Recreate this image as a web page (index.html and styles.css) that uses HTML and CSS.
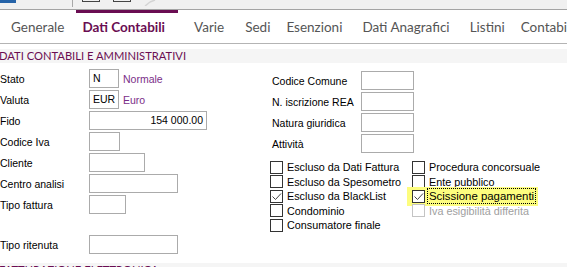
FILE: index.html
```html
<!DOCTYPE HTML>
<html>

<head>
    <meta charset="utf-8">
    <title>Dati Contabili</title>
    <link rel="stylesheet" href="styles.css">
</head>

<body>
    <!-- barra strumenti (tagliata in alto) -->
    <div class="toolbar">
        <span class="tb-blue"></span>
        <span class="tb-sep"></span>
        <span class="tb-btn"></span>
        <span class="tb-btn"></span>
        <svg class="tb-icon" width="12" height="6" viewBox="0 0 12 6">
            <path d="M1 6 L6 2 M6 2 L11 0" stroke="#d4d4d4" stroke-width="1.5" fill="none" />
        </svg>
    </div>

    <nav class="tabs">
        <span class="tab t-gen">Generale</span>
        <span class="tab active">Dati Contabili</span>
        <span class="tab">Varie</span>
        <span class="tab t-sedi">Sedi</span>
        <span class="tab t-ese">Esenzioni</span>
        <span class="tab t-ana">Dati Anagrafici</span>
        <span class="tab t-lis">Listini</span>
        <span class="tab">Contabilità</span>
    </nav>

    <div class="section-head">DATI CONTABILI E AMMINISTRATIVI</div>

    <div class="form">
        <div class="col-left">
            <div class="row"><label>Stato</label><span class="field w29">N</span><span class="desc">Normale</span></div>
            <div class="row"><label>Valuta</label><span class="field w29">EUR</span><span class="desc">Euro</span></div>
            <div class="row"><label>Fido</label><span class="field w117 num">154 000.00</span></div>
            <div class="row"><label>Codice Iva</label><span class="field w30"></span></div>
            <div class="row"><label>Cliente</label><span class="field w55"></span></div>
            <div class="row"><label>Centro analisi</label><span class="field w88"></span></div>
            <div class="row"><label>Tipo fattura</label><span class="field w36"></span></div>
            <div class="row spaced"><label>Tipo ritenuta</label><span class="field w88"></span></div>
        </div>

        <div class="col-right">
            <div class="row"><label>Codice Comune</label><span class="field w53"></span></div>
            <div class="row"><label>N. iscrizione REA</label><span class="field w53"></span></div>
            <div class="row"><label>Natura giuridica</label><span class="field w53"></span></div>
            <div class="row"><label>Attività</label><span class="field w53"></span></div>

            <div class="checks">
                <div class="check"><span class="box"></span>Escluso da Dati Fattura</div>
                <div class="check"><span class="box"></span>Procedura concorsuale</div>
                <div class="check"><span class="box"></span>Escluso da Spesometro</div>
                <div class="check"><span class="box"></span>Ente pubblico</div>
                <div class="check"><span class="box"><svg width="11" height="11" viewBox="0 0 11 11"><path d="M1.5 5.5 L4.5 8.5 L10 2.5" stroke="#444" fill="none" /></svg></span>Escluso da BlackList</div>
                <div class="check focused"><span class="box"><svg width="11" height="11" viewBox="0 0 11 11"><path d="M1.5 5.5 L4.5 8.5 L10 2.5" stroke="#444" fill="none" /></svg></span><span class="focus-text">Scissione pagamenti</span></div>
                <div class="check"><span class="box"></span>Condominio</div>
                <div class="check disabled"><span class="box"></span>Iva esigibilità differita</div>
                <div class="check"><span class="box"></span>Consumatore finale</div>
            </div>
        </div>
    </div>

    <div class="section-head">FATTURAZIONE ELETTRONICA</div>
</body>

</html>
```

FILE: styles.css
```css
/* base */
* {
    box-sizing: border-box;
}

body {
    margin: 0;
    width: 567px;
    height: 267px;
    overflow: hidden;
    background-color: #fff;
    font-family: "Liberation Sans", Arial, sans-serif;
    font-size: 10.5px;
    color: #000;
}

/* barra strumenti */
.toolbar {
    display: flex;
    align-items: flex-start;
    height: 10px;
    background-color: #f0f0f0;
    border-bottom: 1px solid #a3a3a3;
}

.tb-blue {
    width: 16px;
    height: 3px;
    background-color: #2563a8;
}

.tb-sep {
    width: 1px;
    height: 7px;
    margin-left: 56px;
    background-color: #a8a8a8;
}

.tb-btn {
    width: 18px;
    height: 2px;
    margin-left: 9px;
    border: 1px solid #444;
    border-top: none;
}

.tb-btn + .tb-btn {
    margin-left: 13px;
}

.tb-icon {
    margin-left: 13px;
}

/* schede */
.tabs {
    display: flex;
    align-items: center;
    height: 34px;
    padding-left: 11px;
    border-bottom: 1px solid #b4b4b4;
    font-family: Lato, sans-serif;
    font-size: 13.5px;
    color: #555;
    white-space: nowrap;
    overflow: hidden;
}

.tab {
    margin-right: 21px;
}

.tab.t-gen { margin-right: 18px; }
.tab.t-sedi { margin-right: 16px; }
.tab.t-ese { margin-right: 20px; }
.tab.t-ana { margin-right: 20px; }
.tab.t-lis { margin-right: 16px; }

.tab.active {
    position: relative;
    font-weight: bold;
    color: #6a0d52;
    margin-right: 29px;
}

.tab.active::before {
    content: "";
    position: absolute;
    left: -6px;
    right: -13px;
    top: -10px;
    height: 4px;
    background-color: #6a0d52;
}

/* intestazione sezione */
.section-head {
    height: 14px;
    margin-top: 5px;
    margin-left: -1px;
    line-height: 14px;
    background-color: #f5f5f5;
    color: #6a0d52;
    font-family: Lato, sans-serif;
    font-size: 11.2px;
}

/* modulo */
.form {
    display: flex;
    height: 195px;
    padding-top: 5px;
}

.col-left {
    width: 270px;
}

.row {
    display: flex;
    align-items: center;
    height: 21px;
}

.row.spaced {
    margin-top: 19px;
}

.row label {
    width: 89px;
}

.col-right {
    padding-top: 2px;
}

.col-right .row label {
    width: 91px;
    padding-left: 2px;
}

.field {
    height: 19px;
    padding: 0 3px;
    border: 1px solid #ababab;
    line-height: 17px;
}

.field.num {
    text-align: right;
}

.w29 { width: 30px; }
.w30 { width: 31px; }
.w36 { width: 37px; }
.w53 { width: 53px; }
.w55 { width: 56px; }
.w88 { width: 89px; }
.w117 { width: 118px; }

.desc {
    margin-left: 4px;
    color: #7a2e88;
}

/* caselle di controllo */
.checks {
    display: grid;
    grid-template-columns: 142px auto;
    grid-auto-rows: 14.5px;
    margin-top: 6px;
    font-size: 10.8px;
}

.check {
    display: flex;
    align-items: center;
    white-space: nowrap;
}

.box {
    display: flex;
    align-items: center;
    justify-content: center;
    width: 13px;
    height: 13px;
    margin-right: 4px;
    border: 1px solid #333;
    background-color: #fff;
}

.check.disabled {
    color: #a0a0a0;
}

.check.disabled .box {
    border-color: #c4c4c4;
}

.check.focused {
    justify-self: start;
    margin: -2px 0 -2px -5px;
    padding: 0 2px 0 5px;
    background-color: #fdfd7e;
}

.check.focused .box {
    margin-right: 2px;
}

.focus-text {
    height: 16px;
    line-height: 14px;
    padding: 0 1px;
    border: 1px dotted #000;
    font-size: 11.4px;
}
```
